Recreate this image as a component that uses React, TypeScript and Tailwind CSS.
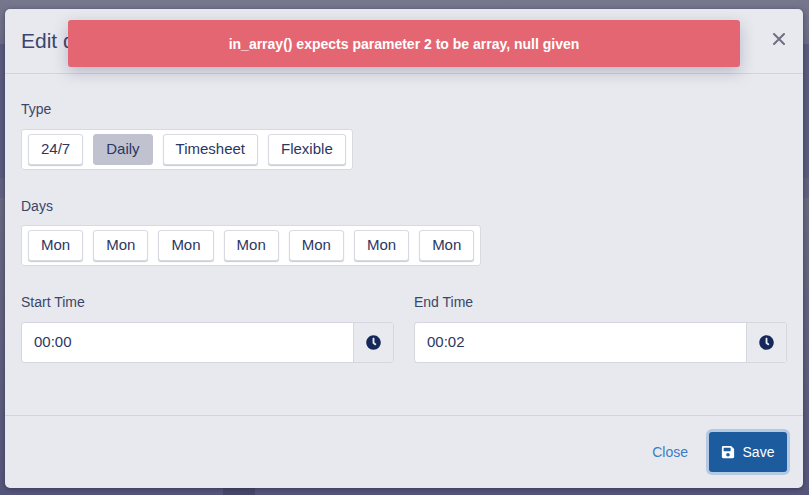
import { FaClock, FaSave } from 'react-icons/fa'

const types = ['24/7', 'Daily', 'Timesheet', 'Flexible']
const days = ['Mon', 'Mon', 'Mon', 'Mon', 'Mon', 'Mon', 'Mon']

function Choice({ label, active }: { label: string; active?: boolean }) {
  return (
    <button
      className={`h-[31px] rounded-[3px] border px-3 text-[15px] text-[#2b3763] ${
        active
          ? 'border-[#c0c2cf] bg-[#c0c2cf]'
          : 'border-[#d8d9e3] bg-white shadow-[0_1px_1px_rgba(40,44,90,0.25)]'
      }`}
    >
      {label}
    </button>
  )
}

function TimeField({ label, value }: { label: string; value: string }) {
  return (
    <div className="flex-1">
      <p className="mb-[10px] text-sm leading-[20px] text-[#3b4568]">{label}</p>
      <div className="flex h-[41px] rounded-[3px] border border-[#d5d6e0]">
        <div className="flex flex-1 items-center rounded-l-[3px] bg-white px-3 text-[15px] text-[#2b3763]">
          {value}
        </div>
        <div className="flex w-[40px] items-center justify-center border-l border-[#d5d6e0] bg-[#e9eaef]">
          <FaClock className="mr-[1px] h-[15px] w-[15px] text-[#14285a]" />
        </div>
      </div>
    </div>
  )
}

export default function App() {
  return (
    <div className="relative flex h-[495px] w-[809px] flex-col overflow-hidden bg-[#62627e] font-['Liberation_Sans',Arial,sans-serif]">
      {/* dimmed page behind the modal */}
      <div className="h-[44px] bg-gradient-to-b from-[#76768c] to-[#6a6a86]" />
      <div className="h-[134px] bg-[#5a5a7c]" />
      <div className="h-[20px] bg-[#60607f]" />
      <div className="flex flex-1 items-end bg-gradient-to-b from-[#68687f] to-[#55557a]">
        <div className="ml-[223px] h-[8px] w-[32px] bg-[#47476a]" />
      </div>

      <div className="absolute left-[5px] top-[9px] flex h-[479px] w-[798px] flex-col rounded-[5px] bg-[#e8e9ee] shadow-[0_1px_4px_rgba(30,30,60,0.5)]">
        <header className="flex h-[65px] shrink-0 items-center justify-between border-b border-[#d2d3db] pl-4 pr-[18px]">
          <h2 className="text-[21px] text-[#3a4570]">Edit daily</h2>
          <button className="mb-[5px] text-[#6d6f85]">
            <svg width="12" height="12" viewBox="0 0 12 12" stroke="currentColor" strokeWidth="2" strokeLinecap="round">
              <path d="M1 1 11 11M11 1 1 11" />
            </svg>
          </button>
        </header>

        <div className="flex-1 px-4 pt-[25px]">
          <p className="mb-[10px] text-sm leading-[20px] text-[#3b4568]">Type</p>
          <div className="inline-flex gap-[10px] rounded-[3px] border border-[#d8d9e3] bg-white px-[6px] py-1">
            {types.map((t) => (
              <Choice key={t} label={t} active={t === 'Daily'} />
            ))}
          </div>

          <p className="mb-[9px] mt-[26px] text-sm leading-[20px] text-[#3b4568]">Days</p>
          <div className="inline-flex gap-[10px] rounded-[3px] border border-[#d8d9e3] bg-white px-[6px] py-1">
            {days.map((d, i) => (
              <Choice key={i} label={d} />
            ))}
          </div>

          <div className="mt-[26px] flex gap-5">
            <TimeField label="Start Time" value="00:00" />
            <TimeField label="End Time" value="00:02" />
          </div>
        </div>

        <footer className="flex h-[73px] shrink-0 items-center justify-end gap-[21px] border-t border-[#d2d3db] pr-4">
          <button className="text-sm text-[#3a7cc6]">Close</button>
          <button className="flex h-[40px] w-[78px] items-center justify-center gap-2 rounded-[3px] bg-[#1c5c9e] text-sm text-white ring-[3px] ring-[#b5c9e3]">
            <FaSave className="-ml-[1px] h-[14px] w-[14px]" />
            Save
          </button>
        </footer>
      </div>

      <div className="absolute left-[68px] top-[20px] flex h-[47px] w-[672px] items-center justify-center rounded-[3px] bg-[#e46672] text-sm font-bold text-white shadow-[0_5px_15px_rgba(40,44,90,0.25)]">
        in_array() expects parameter 2 to be array, null given
      </div>
    </div>
  )
}
